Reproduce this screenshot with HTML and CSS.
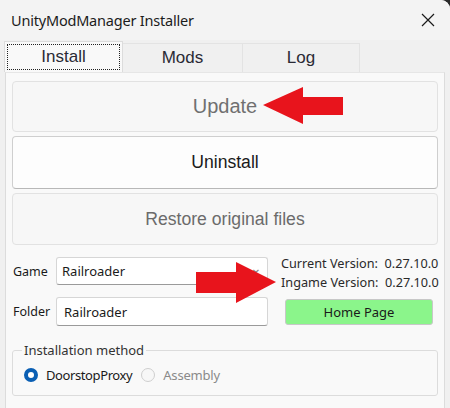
FILE: index.html
```html
<!DOCTYPE html>
<html lang="en">
<head>
  <meta charset="UTF-8" />
  <title>UnityModManager Installer</title>
  <link rel="stylesheet" href="styles.css">
</head>
<body>
  <div class="window">
    <div class="titlebar">
      <span class="title">UnityModManager Installer</span>
      <svg class="close" width="14" height="14" viewBox="0 0 14 14"><path d="M1 1 L13 13 M13 1 L1 13" stroke="#1a1a1a" stroke-width="1.2" fill="none"/></svg>
    </div>

    <!-- Вкладки -->
    <div class="tabs">
      <div class="tab active"><span>Install</span></div>
      <div class="tab">Mods</div>
      <div class="tab">Log</div>
    </div>

    <div class="panel">
      <div class="buttons">
        <div class="btn big">Update</div>
        <div class="btn primary">Uninstall</div>
        <div class="btn dim">Restore original files</div>
      </div>

      <div class="info">
        <div class="fields">
          <div class="field">
            <label>Game</label>
            <div class="combo">Railroader <span class="chev">&#8964;</span></div>
          </div>
          <div class="field">
            <label>Folder</label>
            <div class="textbox">Railroader</div>
          </div>
        </div>
        <div class="versions">
          <div class="ver">Current Version: &nbsp;0.27.10.0</div>
          <div class="ver">Ingame Version: &nbsp;0.27.10.0</div>
          <div class="home">Home Page</div>
        </div>
      </div>

      <fieldset class="method">
        <legend>Installation method</legend>
        <span class="radio checked"></span><span class="opt">DoorstopProxy</span>
        <span class="radio off"></span><span class="opt off">Assembly</span>
      </fieldset>
    </div>

    <!-- Стрелки -->
    <svg class="arrow a1" width="82" height="40" viewBox="0 0 82 40"><path d="M0 18 L40 0 L40 10 L80 10 L80 28 L40 28 L40 37 Z" fill="#e8141c"/></svg>
    <svg class="arrow a2" width="82" height="42" viewBox="0 0 82 42"><path d="M80 20 L40 0 L40 10 L0 10 L0 31 L40 31 L40 41 Z" fill="#e8141c"/></svg>
  </div>
</body>
</html>
```

FILE: styles.css
```css
* { box-sizing: border-box; margin: 0; padding: 0; }
html, body {
  width: 450px; height: 408px; overflow: hidden;
  background: #2a2a2a; font-family: 'Noto Sans', 'Open Sans', sans-serif; color: #1a1a1a;
}

.window {
  position: relative; width: 450px; height: 408px; background: #f0f0f0;
  border-top-right-radius: 9px; overflow: hidden;
}

.titlebar {
  height: 40px; padding: 0 15px 0 11px; display: flex; align-items: center; justify-content: space-between;
  background: #f3f3f3; font-size: 14.5px; color: #1b1b1b;
}
.title { letter-spacing: -0.2px; }

/* Вкладки */
.tabs { display: flex; height: 32px; padding-left: 4px; align-items: flex-end; }
.tab {
  width: 120px; height: 29px; display: flex; align-items: center; justify-content: center;
  background: #f0f0f0; border: 1px solid #e3e3e3; border-bottom: none; border-left: none;
  font-family: 'Liberation Sans', Arial, sans-serif; font-size: 17px; color: #2a2a35;
}
.tab.active { width: 119px; height: 31px; background: #f9f9f9; border: 1px solid #dcdcdc; border-bottom: none; padding: 2px; }
.tab.active span {
  width: 100%; height: 100%; display: flex; align-items: center; justify-content: center;
  border: 1px dotted #222;
}
.tab:nth-child(3) { width: 117px; }

.panel {
  margin: 0 5px; height: 340px; padding: 8px 6px 0 6px;
  background: #f9f9f9; border: 1px solid #dcdcdc; border-top: 1px solid #e6e6e6;
}

.buttons { display: flex; flex-direction: column; gap: 4px; }
.btn {
  height: 52px; display: flex; align-items: center; justify-content: center;
  border: 1px solid #e2e2e2; border-radius: 4px; background: #f7f7f7;
  font-family: 'Liberation Sans', Arial, sans-serif; font-size: 17.6px; color: #6b6b6b;
}
.btn.big { height: 51px; font-size: 20px; color: #707070; }
.btn.primary { height: 53px; background: #fdfdfd; border-color: #cfcfcf; border-bottom-color: #b8b8b8; color: #1a1a1a; }

.info { display: flex; justify-content: space-between; margin-top: 9px; height: 87px; }
.fields { display: flex; flex-direction: column; gap: 12px; padding-top: 3px; }
.field { display: flex; align-items: center; gap: 6px; font-size: 12.5px; color: #1a1a1a; }
.field label { width: 38px; padding-left: 1px; }
.combo, .textbox {
  width: 212px; height: 28px; display: flex; align-items: center; justify-content: space-between;
  padding: 0 5px; background: #fff; border: 1px solid #d6d6d6; border-bottom-color: #9a9a9a; border-radius: 3px;
  font-size: 13px;
}
.textbox { height: 29px; padding-left: 7px; }
.chev { color: #888; font-size: 14px; margin-top: -8px; }

.versions {
  display: flex; flex-direction: column; width: 160px; margin-right: -3px;
  font-size: 12.7px; color: #2a2a2a; line-height: 19px;
}
.ver { white-space: nowrap; }
.home {
  margin: 7px 0 0 4px; width: 148px; height: 26px; display: flex; align-items: center; justify-content: center;
  background: #8bf58b; border: 1px solid #c8c8c8; border-radius: 3px; color: #1a1a1a; font-size: 13px;
}

/* Группа */
.method {
  margin-top: 0; height: 55px; border: 1px solid #dcdcdc; border-radius: 3px;
  padding: 0 0 4px 11px; display: flex; align-items: center; font-size: 13px;
}
.method legend { padding: 0 2px; margin-left: -2px; font-size: 13px; color: #333; }
.radio { width: 14px; height: 14px; border-radius: 50%; margin-right: 8px; }
.radio.checked { border: 4px solid #0a5fb4; background: #fff; }
.radio.off { border: 1px solid #cfcfcf; background: #f7f7f7; margin-left: 9px; }
.opt { letter-spacing: -0.4px; color: #1a1a1a; }
.opt.off { color: #8a8a8a; letter-spacing: -0.2px; }

.arrow { position: absolute; }
.a1 { left: 263px; top: 87px; }
.a2 { left: 196px; top: 262px; }
```
